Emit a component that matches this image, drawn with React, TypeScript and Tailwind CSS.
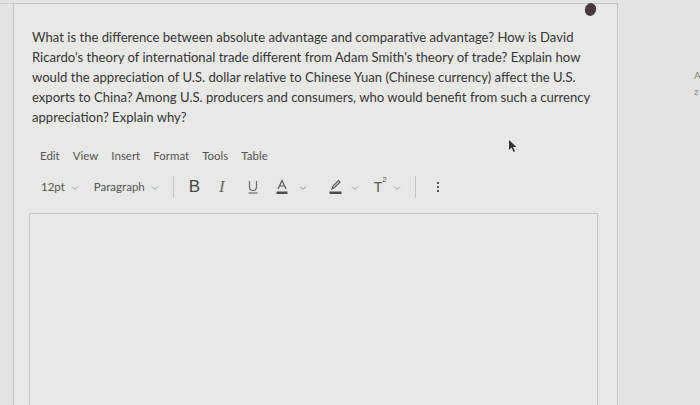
import React from "react";

const Chev = ({ ml = 5 }: { ml?: number }) => (
  <svg width="8" height="6" viewBox="0 0 8 6" className="mt-[1px]" style={{ marginLeft: ml }}>
    <path d="M1 1.5 L4 4.5 L7 1.5" fill="none" stroke="#9a9a9a" strokeWidth="1" />
  </svg>
);

export default function App() {
  return (
    <div
      className="w-[700px] h-[405px] overflow-hidden bg-[#e3e3e1] relative"
      style={{ fontFamily: "Lato, 'Open Sans', sans-serif" }}
    >
      <div className="absolute left-0 top-[3px] w-[14px] border-t border-[#cfcfcd]" />
      <div className="ml-[13px] mt-[3px] w-[605px] h-[402px] border-l border-t border-r border-[#c4c4c2] bg-[#e8e8e6] flex flex-col">
        <div className="pl-[18px] pt-[23px] text-[13.1px] leading-[20px] text-[#363636] whitespace-nowrap">
          What is the difference between absolute advantage and comparative advantage? How is David
          <br />
          Ricardo's theory of international trade different from Adam Smith's theory of trade? Explain how
          <br />
          would the appreciation of U.S. dollar relative to Chinese Yuan (Chinese currency) affect the U.S.
          <br />
          exports to China? Among U.S. producers and consumers, who would benefit from such a currency
          <br />
          appreciation? Explain why?
        </div>
        <div className="mt-[21px] pl-[26px] flex gap-[13px] text-[11.5px] leading-[16px] text-[#555555]">
          <span>Edit</span>
          <span>View</span>
          <span>Insert</span>
          <span>Format</span>
          <span>Tools</span>
          <span>Table</span>
        </div>
        <div className="mt-[13px] pl-[27px] flex items-center h-[20px] text-[11.5px] text-[#555555]">
          <span>12pt</span>
          <Chev ml={6} />
          <span className="ml-[15px]">Paragraph</span>
          <Chev ml={6} />
          <div className="ml-[14px] w-px h-[22px] bg-[#c4c4c2]" />
          <span className="ml-[15px] text-[17px] text-[#4a4a4a]" style={{ fontFamily: "'Liberation Sans', sans-serif" }}>B</span>
          <span className="ml-[19px] text-[17px] italic text-[#6a6a6a]" style={{ fontFamily: "'Liberation Serif', serif" }}>I</span>
          <span className="ml-[23px] flex flex-col items-center">
            <svg width="10" height="14" viewBox="0 0 10 14">
              <path d="M1.5 1 V7 A3.5 3.5 0 0 0 8.5 7 V1" fill="none" stroke="#6a6a6a" strokeWidth="1.2" />
              <path d="M0.5 13 H9.5" stroke="#6a6a6a" strokeWidth="1.2" />
            </svg>
          </span>
          <span className="ml-[18px]">
            <svg width="12" height="16" viewBox="0 0 12 16">
              <path d="M2 10 L6 1.5 L10 10 M3.5 7 H8.5" fill="none" stroke="#5a5a5a" strokeWidth="1.2" />
              <rect x="0.5" y="12.5" width="11" height="2.5" fill="#4a4a4a" />
            </svg>
          </span>
          <Chev ml={11} />
          <span className="ml-[22px]">
            <svg width="13" height="16" viewBox="0 0 13 16">
              <path d="M3 10 L4 7 L9.5 1.5 L11 3 L5.5 8.5 Z" fill="none" stroke="#5a5a5a" strokeWidth="1.2" />
              <rect x="0.5" y="12.5" width="12" height="2.5" fill="#4a4a4a" />
            </svg>
          </span>
          <Chev ml={9} />
          <span className="ml-[15px] text-[14px] text-[#5a5a5a] flex items-start" style={{ fontFamily: "'Liberation Sans', sans-serif" }}>
            T<span className="text-[8px] leading-[8px] -mt-[1px]">2</span>
          </span>
          <Chev ml={6} />
          <div className="ml-[14px] w-px h-[22px] bg-[#c4c4c2]" />
          <span className="ml-[21px] flex flex-col gap-[2px]">
            <span className="w-[2px] h-[2px] bg-[#555]" />
            <span className="w-[2px] h-[2px] bg-[#555]" />
            <span className="w-[2px] h-[2px] bg-[#555]" />
          </span>
        </div>
        <div className="mt-[16px] ml-[15px] w-[569px] flex-1 border-l border-t border-r border-[#c6c6c4] bg-[#eaeae8]" />
      </div>
      {/* dark mark top right */}
      <div className="absolute left-[585px] top-[3px] w-[11px] h-[13px] rounded-[50%] bg-[#4a3a40] rotate-[20deg]" />
      {/* mouse cursor */}
      <svg className="absolute left-[508px] top-[139px]" width="10" height="14" viewBox="0 0 10 14">
        <path d="M1 1 L1 11 L3.5 8.5 L5.5 13 L7 12.3 L5 8 L8.5 8 Z" fill="#333" />
      </svg>
      <span className="absolute left-[694px] top-[68px] text-[10px] text-[#888]">A</span>
      <span className="absolute left-[694px] top-[84px] text-[10px] text-[#888]">z</span>
    </div>
  );
}
